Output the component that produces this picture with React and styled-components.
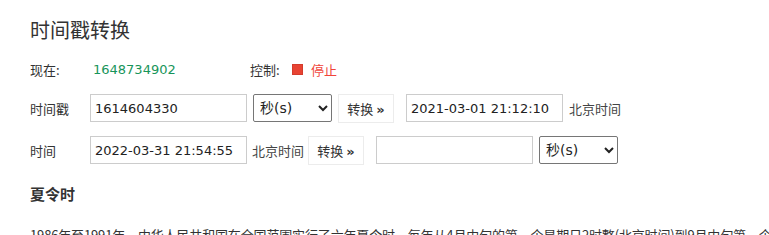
import React, { useState } from 'react';
import styled, { createGlobalStyle } from 'styled-components';

const GlobalStyle = createGlobalStyle`
  html, body {
    margin: 0;
    padding: 0;
    background: #fff;
    overflow: hidden;
  }
  body {
    font-family: "DejaVu Sans", Verdana, "Noto Sans CJK SC", sans-serif;
    font-size: 13px;
    color: #333;
  }
`;

const Page = styled.div`
  width: 1200px;
  padding: 16px 30px 0;
`;

const Title = styled.h1`
  margin: 0 0 11px;
  font-size: 20px;
  font-weight: normal;
  line-height: 28px;
  font-family: "Noto Sans CJK SC", sans-serif;
  color: #333;
`;

const Row = styled.div`
  display: flex;
  align-items: center;
  gap: 6px;
  height: 28px;
  margin-bottom: ${(p) => p.$gap || 15}px;
`;

const Label = styled.span`
  width: ${(p) => p.$w || 54}px;
  font-family: "Noto Sans CJK SC", sans-serif;
`;

const Now = styled.span`
  color: #17955a;
  width: 151px;
`;

const Stop = styled.button`
  display: flex;
  align-items: center;
  gap: 8px;
  border: none;
  background: none;
  padding: 0;
  margin-left: 2px;
  font: inherit;
  font-family: "Noto Sans CJK SC", sans-serif;
  color: #f0443a;
  cursor: pointer;
`;

const Square = styled.span`
  width: 11px;
  height: 11px;
  background: #e84333;
  border: 1px solid #d43b2c;
  box-sizing: border-box;
`;

const Input = styled.input`
  box-sizing: border-box;
  width: 157px;
  height: 28px;
  border: 1px solid #ccc;
  padding: 0 4px;
  font: inherit;
  font-size: 13px;
  color: #222;
  outline: none;
`;

const Select = styled.select`
  box-sizing: border-box;
  width: 79px;
  height: 28px;
  border: 1px solid #767676;
  border-radius: 2px;
  padding: 0 2px;
  font: inherit;
  font-size: 14px;
  color: #222;
  background: #fff;
`;

const Button = styled.button`
  box-sizing: border-box;
  height: 29px;
  width: 56px;
  border: 1px solid #ececec;
  background: #fff;
  font-family: "Noto Sans CJK SC", sans-serif;
  font-size: 13px;
  color: #333;
  padding: 0;
  cursor: pointer;
  b {
    font-family: "DejaVu Sans", sans-serif;
    margin-left: 3px;
  }
`;

const Zone = styled.span`
  font-family: "Noto Sans CJK SC", sans-serif;
  color: #444;
  margin: 0 ${(p) => (p.$tight ? -2 : 0)}px 0 ${(p) => (p.$tight ? -1 : 0)}px;
`;

const Spacer = styled.span`
  width: 0;
`;

const SubTitle = styled.h3`
  margin: 19px 0 19px;
  font-size: 15px;
  font-weight: bold;
  line-height: 22px;
  font-family: "Noto Sans CJK SC", sans-serif;
`;

const Para = styled.p`
  margin: 0;
  font-family: "Noto Sans CJK SC", sans-serif;
  font-size: 13px;
  line-height: 22px;
  letter-spacing: -0.15px;
`;

export default function App() {
  const [ts, setTs] = useState('1614604330');
  const [time, setTime] = useState('2022-03-31 21:54:55');

  return (
    <Page>
      <GlobalStyle />
      <Title>时间戳转换</Title>
      <Row $gap={11}>
        <Label $w={57}>现在:</Label>
        <Now>1648734902</Now>
        <Label $w={34}>控制:</Label>
        <Stop>
          <Square />
          停止
        </Stop>
      </Row>
      <Row $gap={14}>
        <Label>时间戳</Label>
        <Input value={ts} onChange={(e) => setTs(e.target.value)} />
        <Select defaultValue="s">
          <option value="s">秒(s)</option>
          <option value="ms">毫秒(ms)</option>
        </Select>
        <Button>
          转换<b>»</b>
        </Button>
        <Spacer />
        <Input defaultValue="2021-03-01 21:12:10" />
        <Zone>北京时间</Zone>
      </Row>
      <Row>
        <Label>时间</Label>
        <Input value={time} onChange={(e) => setTime(e.target.value)} />
        <Zone $tight>北京时间</Zone>
        <Button>
          转换<b>»</b>
        </Button>
        <Spacer />
        <Input defaultValue="" />
        <Select defaultValue="s">
          <option value="s">秒(s)</option>
          <option value="ms">毫秒(ms)</option>
        </Select>
      </Row>
      <SubTitle>夏令时</SubTitle>
      <Para>
        1986年至1991年，中华人民共和国在全国范围实行了六年夏令时，每年从4月中旬的第一个星期日2时整(北京时间)到9月中旬第一个星期日的凌晨2时整(北京夏令时)。
      </Para>
    </Page>
  );
}
